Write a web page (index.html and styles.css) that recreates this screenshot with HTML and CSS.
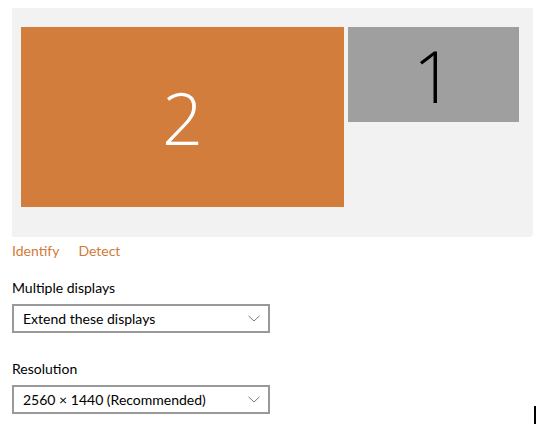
FILE: index.html
```html
<!DOCTYPE html>
<html>
<head>
<meta charset="utf-8">
<link rel="stylesheet" href="styles.css">
</head>
<body>
<div class="page">
  <div class="panel">
    <div class="monitor primary"><span class="num">2</span></div>
    <div class="monitor secondary"><span class="num">1</span></div>
  </div>
  <div class="links">
    <a class="link">Identify</a>
    <a class="link">Detect</a>
  </div>
  <div class="field">
    <div class="label">Multiple displays</div>
    <div class="select">
      <span class="value">Extend these displays</span>
      <svg class="chev" width="12" height="7" viewBox="0 0 12 7"><path d="M0.5 0.8 L6 6 L11.5 0.8" fill="none" stroke="#7a7a7a" stroke-width="1"/></svg>
    </div>
  </div>
  <div class="field second">
    <div class="label">Resolution</div>
    <div class="select">
      <span class="value">2560 × 1440 (Recommended)</span>
      <svg class="chev" width="12" height="7" viewBox="0 0 12 7"><path d="M0.5 0.8 L6 6 L11.5 0.8" fill="none" stroke="#7a7a7a" stroke-width="1"/></svg>
    </div>
  </div>
  <div class="cursor"></div>
</div>
</body>
</html>
```

FILE: styles.css
```css
html, body {
  margin: 0;
  padding: 0;
  background: #ffffff;
}
body {
  font-family: "Lato", "Noto Sans", sans-serif;
  color: #000;
}
.page {
  position: relative;
  width: 544px;
  height: 440px;
  overflow: hidden;
}
.panel {
  margin: 8px 11px 0 12px;
  height: 210px;
  padding: 19px 0 0 9px;
  background: #f2f2f2;
  border-radius: 0 0 4px 0;
  display: flex;
  align-items: flex-start;
  gap: 4px;
}
.monitor {
  display: flex;
  align-items: center;
  justify-content: center;
}
.primary {
  width: 323px;
  height: 180px;
  background: #d27d3c;
  color: #ffffff;
}
.secondary {
  width: 171px;
  height: 95px;
  background: #9f9f9f;
  color: #000000;
}
.num {
  font-family: "Open Sans", "Noto Sans", sans-serif;
  font-weight: 300;
  font-size: 72px;
  line-height: 1;
}
.links {
  margin: 4px 0 0 12px;
  display: flex;
  gap: 19px;
  font-size: 14px;
  line-height: 20px;
}
.link {
  color: #d27a3a;
}
.field {
  margin: 17px 0 0 12px;
}
.field.second {
  margin-top: 26px;
}
.label {
  font-size: 14px;
  line-height: 20px;
  color: #000;
}
.select {
  margin-top: 6px;
  width: 258px;
  height: 29px;
  box-sizing: border-box;
  border: 2px solid #999999;
  display: flex;
  align-items: center;
  justify-content: space-between;
  padding: 0 8px 0 9px;
}
.value {
  font-size: 14px;
  line-height: 20px;
  color: #000;
}
.chev {
  display: block;
}
.cursor {
  position: absolute;
  left: 534px;
  top: 406px;
  width: 2px;
  height: 18px;
  background: #000;
}
```
